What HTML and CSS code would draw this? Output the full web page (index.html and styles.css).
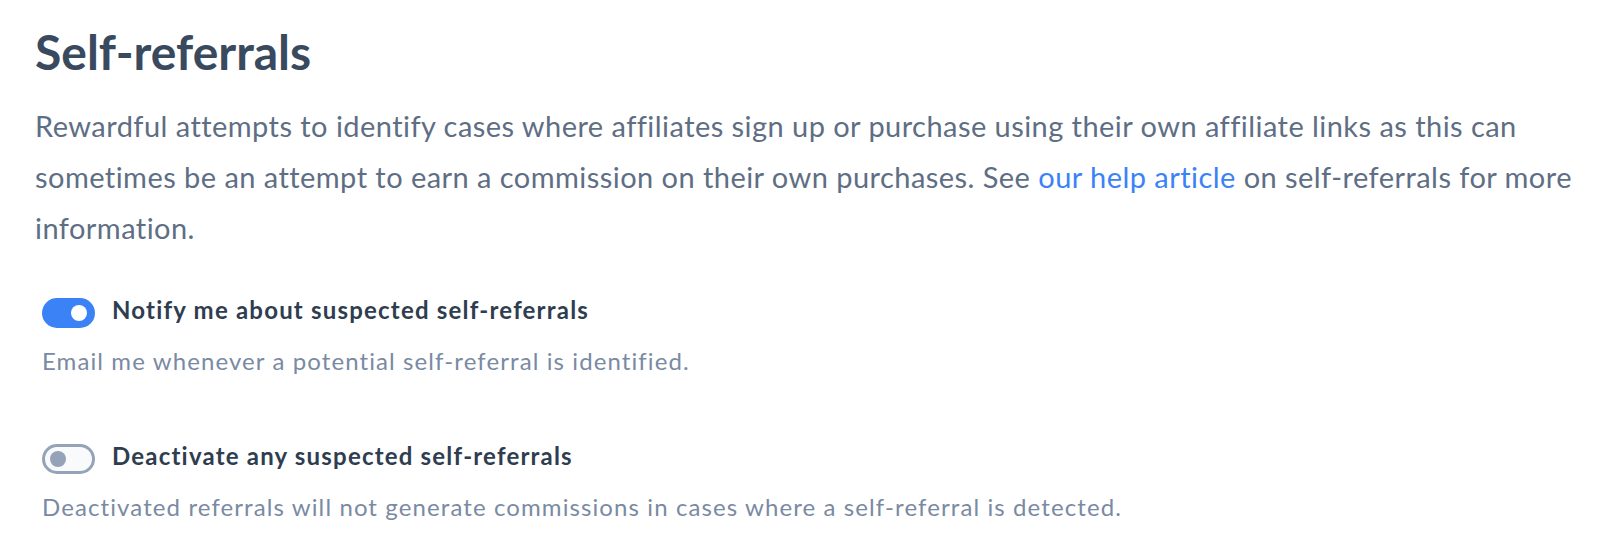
FILE: index.html
```html
<!DOCTYPE html>
<html>
<head>
<meta charset="utf-8">
<link rel="stylesheet" href="styles.css">
</head>
<body>
<div class="page">
  <h1 class="title">Self-referrals</h1>
  <p class="intro">Rewardful attempts to identify cases where affiliates sign up or purchase using their own affiliate links as this can sometimes be an attempt to earn a commission on their own purchases. See <a class="link" href="#">our help article</a> on self-referrals for more information.</p>

  <div class="option">
    <div class="option-row">
      <span class="toggle toggle-on"><span class="knob"></span></span>
      <span class="option-label">Notify me about suspected self-referrals</span>
    </div>
    <div class="option-desc">Email me whenever a potential self-referral is identified.</div>
  </div>

  <div class="option">
    <div class="option-row">
      <span class="toggle toggle-off"><span class="knob"></span></span>
      <span class="option-label">Deactivate any suspected self-referrals</span>
    </div>
    <div class="option-desc">Deactivated referrals will not generate commissions in cases where a self-referral is detected.</div>
  </div>
</div>
</body>
</html>
```

FILE: styles.css
```css
html, body {
  margin: 0;
  padding: 0;
  background: #ffffff;
}
body {
  font-family: Lato, "Liberation Sans", sans-serif;
  font-variant-ligatures: none;
}
.page {
  padding: 24px 12px 0 35px;
}
.title {
  margin: 0;
  font-size: 48px;
  font-weight: 700;
  color: #3a4a5e;
  line-height: 56px;
}
.intro {
  margin: 20px 0 0 0;
  font-size: 29px;
  line-height: 51px;
  letter-spacing: 0.45px;
  color: #5e6e84;
}
.link {
  color: #3b82f6;
  text-decoration: none;
}
.option {
  margin-top: 37px;
  padding-left: 7px;
}
.option + .option {
  margin-top: 61px;
}
.option-row {
  display: flex;
  align-items: center;
  gap: 17px;
}
.toggle {
  box-sizing: border-box;
  width: 53px;
  height: 30px;
  margin-top: 8px;
  border-radius: 15px;
  display: flex;
  align-items: center;
  padding: 0 8px;
  flex: none;
}
.toggle-on {
  background: #3b82f6;
  justify-content: flex-end;
}
.toggle-off {
  background: #f8fafc;
  border: 3px solid #94a3b8;
  padding: 0 5px;
}
.knob {
  width: 16px;
  height: 16px;
  border-radius: 50%;
}
.toggle-on .knob { background: #ffffff; }
.toggle-off .knob { background: #94a3b8; }
.option-label {
  font-size: 24px;
  font-weight: 700;
  letter-spacing: 1.2px;
  color: #2f3d50;
}
.option-desc {
  margin-top: 18px;
  font-size: 24px;
  letter-spacing: 1.1px;
  color: #7a8aa3;
}
```
